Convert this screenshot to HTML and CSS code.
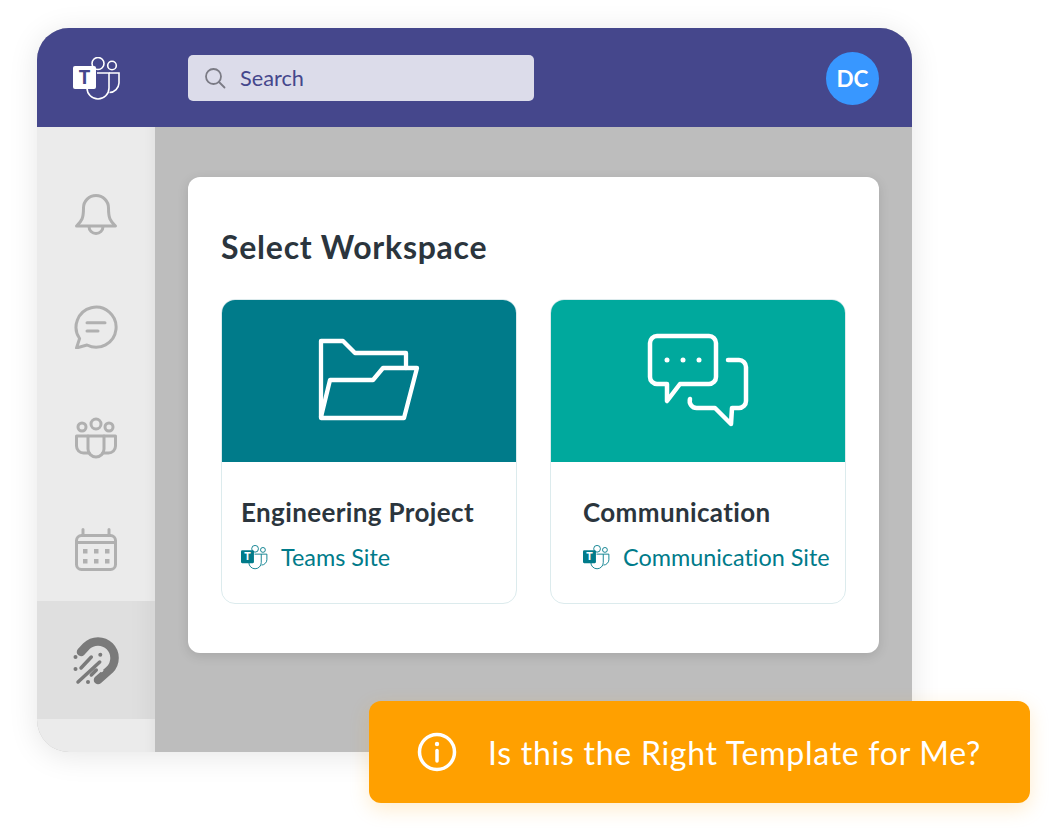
FILE: index.html
```html
<!DOCTYPE html>
<html lang="en">
<head>
<meta charset="utf-8">
<title>Select Workspace</title>
<link rel="stylesheet" href="styles.css">
</head>
<body>
<div class="stage">
  <div class="app">
    <header class="topbar">
      <svg class="teams-logo" viewBox="0 0 48 44">
        <g class="teams-line"><circle cx="25" cy="6.500" r="6"/><circle cx="39" cy="8.500" r="4.300"/><path d="M24 16H36V31A11 11 0 0 1 14 31V30"/><path d="M36 16H46V26A10 10 0 0 1 36.500 35.500"/></g>
        <rect class="teams-box" x="0" y="9" width="23" height="23" rx="2"/>
        <text class="teams-t" x="11.500" y="27" text-anchor="middle">T</text>
      </svg>
      <div class="search">
        <svg class="search-icon" viewBox="0 0 22 22"><circle cx="9.500" cy="9.500" r="7.500"/><path d="M15 15L20.500 20.500"/></svg>
        <span class="search-text">Search</span>
      </div>
      <div class="avatar">DC</div>
    </header>
    <div class="body">
      <nav class="sidebar">
        <div class="nav-icons">
          <svg class="nav-icon" viewBox="0 0 44 44"><path d="M2.500 33C8 28 9.500 25 9.500 15A12.500 12.500 0 0 1 34.500 15C34.500 25 36 28 41.500 33Z"/><path d="M15 33.500A7 7 0 0 0 29 33.500"/></svg>
          <svg class="nav-icon" viewBox="0 0 44 44"><path d="M5.600 33.500A20 20 0 1 1 13 40L2.500 43Z"/><path d="M13 17.700H31M13 26H24"/></svg>
          <svg class="nav-icon" viewBox="0 0 44 44"><circle cx="22" cy="8" r="5"/><circle cx="8" cy="11" r="4"/><circle cx="35" cy="11" r="4"/><path d="M14 20H30V33A8 8 0 0 1 14 33Z"/><path d="M14 20H2.500V30A7 7 0 0 0 9.500 37H15"/><path d="M30 20H41.500V30A7 7 0 0 1 34.500 37H29"/></svg>
          <svg class="nav-icon" viewBox="0 0 44 44"><rect x="2.500" y="7.500" width="39" height="34" rx="5"/><path d="M2.500 14.500H41.500M9 1.500V7.500M35 1.500V7.500"/><path class="cal-dots" d="M9 21h4.500v4.500H9zM20 21h4.500v4.500H20zM31 21h4.500v4.500H31zM9 31h4.500v4.500H9zM20 31h4.500v4.500H20zM31 31h4.500v4.500H31z"/></svg>
        </div>
        <div class="nav-active">
          <svg class="brand" viewBox="0 0 46 46"><path class="brand-ring" d="M8 15L13.300 9.300A16.500 16.500 0 1 1 36.700 32.700L25 43"/><path class="brand-streak" d="M18.300 20L8 31M26.700 25L5 45M23.300 33L18.300 38"/><circle class="brand-dot" cx="2.500" cy="20" r="2"/><circle class="brand-dot" cx="2.500" cy="32" r="2"/><circle class="brand-dot" cx="15" cy="45" r="2"/><circle class="brand-dot" cx="27.300" cy="17.700" r="2"/><circle class="brand-hole" cx="28.300" cy="33.300" r="2"/></svg>
        </div>
      </nav>
      <main class="content">
        <section class="modal">
          <h1 class="modal-title">Select Workspace</h1>
          <div class="cards">
            <article class="card">
              <div class="media media-teal">
                <svg class="folder" viewBox="0 0 104 84"><path d="M3 79V3H25L37 15H88V30"/><path d="M3 79L12 42H55L65 30H99L86 80H3Z"/></svg>
              </div>
              <div class="card-body">
                <h2 class="card-title">Engineering Project</h2>
                <div class="site">
                  <svg class="teams-small" viewBox="0 0 48 44">
                    <g class="teams-line"><circle cx="25" cy="6.500" r="6"/><circle cx="39" cy="8.500" r="4.300"/><path d="M24 16H36V31A11 11 0 0 1 14 31V30"/><path d="M36 16H46V26A10 10 0 0 1 36.500 35.500"/></g>
                    <rect class="teams-box" x="0" y="9" width="23" height="23" rx="2"/>
                    <text class="teams-t" x="11.500" y="27" text-anchor="middle">T</text>
                  </svg>
                  <span>Teams Site</span>
                </div>
              </div>
            </article>
            <article class="card">
              <div class="media media-green">
                <svg class="chat" viewBox="0 0 108 100"><path d="M12 6H64A7 7 0 0 1 71 13V47A7 7 0 0 1 64 54H35L22 71V54H12A7 7 0 0 1 5 47V13A7 7 0 0 1 12 6Z"/><path d="M83 30H94A7 7 0 0 1 101 37V71A7 7 0 0 1 94 78H87L86 94L70 78H52A7 7 0 0 1 45 69"/><circle class="chat-dot" cx="22" cy="30" r="2.500"/><circle class="chat-dot" cx="38" cy="30" r="2.500"/><circle class="chat-dot" cx="54" cy="30" r="2.500"/></svg>
              </div>
              <div class="card-body card-body-wide">
                <h2 class="card-title">Communication</h2>
                <div class="site">
                  <svg class="teams-small" viewBox="0 0 48 44">
                    <g class="teams-line"><circle cx="25" cy="6.500" r="6"/><circle cx="39" cy="8.500" r="4.300"/><path d="M24 16H36V31A11 11 0 0 1 14 31V30"/><path d="M36 16H46V26A10 10 0 0 1 36.500 35.500"/></g>
                    <rect class="teams-box" x="0" y="9" width="23" height="23" rx="2"/>
                    <text class="teams-t" x="11.500" y="27" text-anchor="middle">T</text>
                  </svg>
                  <span>Communication Site</span>
                </div>
              </div>
            </article>
          </div>
        </section>
      </main>
    </div>
  </div>
  <div class="toast">
    <svg class="toast-icon" viewBox="0 0 40 40"><circle cx="20" cy="20" r="17.500"/><path d="M20 18.500V29"/><circle class="toast-dot" cx="20" cy="12" r="2.200"/></svg>
    <span>Is this the Right Template for Me?</span>
  </div>
</div>
</body>
</html>
```
FILE: styles.css
```css
* { box-sizing: border-box; }
html, body { margin: 0; background: #fff; }
body { font-family: Lato, "Liberation Sans", sans-serif; overflow: hidden; font-variant-ligatures: none; }

.stage { position: relative; width: 1050px; height: 829px; padding: 28px 0 0 37px; overflow: hidden; }

.app {
  width: 875px; height: 724px; display: flex; flex-direction: column;
  border-radius: 32px; overflow: hidden; background: #bdbdbd;
  box-shadow: 0 4px 30px rgba(0,0,0,.10);
}

.topbar { height: 99px; flex: none; background: #45478c; display: flex; align-items: center; padding: 0 33px 0 36px; }
.teams-logo { width: 48px; height: 44px; margin-top: 2px; color: #fff; --t: #45478c; flex: none; }
.teams-line { fill: none; stroke: currentColor; stroke-width: 1.600; }
.teams-box { fill: currentColor; }
.teams-t { fill: var(--t); font: 900 19px Lato, sans-serif; }

.search { width: 346px; height: 46px; margin-left: 67px; background: #dcdcea; border-radius: 5px; display: flex; align-items: center; padding-left: 16px; }
.search-icon { width: 22px; height: 22px; fill: none; stroke: #7b7b85; stroke-width: 1.800; stroke-linecap: round; }
.search-text { margin-left: 14px; font-size: 21.700px; color: #45478c; }

.avatar { margin: 2px 0 0 auto; width: 53px; height: 53px; border-radius: 50%; background: #3897ff; color: #fff; display: flex; align-items: center; justify-content: center; font-size: 22.500px; font-weight: 700; }

.body { flex: 1; display: flex; min-height: 0; }

.sidebar { width: 118px; flex: none; background: #ebebeb; padding-top: 66px; box-shadow: inset -14px 0 12px -12px rgba(0,0,0,.05); }
.nav-icons { display: flex; flex-direction: column; align-items: center; gap: 67.700px; margin-bottom: 29px; }
.nav-icon { width: 44px; height: 44px; fill: none; stroke: #b0b0b0; stroke-width: 3; stroke-linecap: round; stroke-linejoin: round; display: block; }
.cal-dots { fill: #b0b0b0; stroke: none; }
.nav-active { height: 118px; background: #dfdfdf; display: flex; align-items: center; justify-content: center; box-shadow: inset -40px 0 20px -30px rgba(0,0,0,.04); }
.brand { width: 46px; height: 46px; overflow: visible; }
.brand-ring { fill: none; stroke: #7a7a7a; stroke-width: 8.500; stroke-linecap: round; }
.brand-streak { fill: none; stroke: #7a7a7a; stroke-width: 3.500; stroke-linecap: round; }
.brand-dot { fill: #7a7a7a; }
.brand-hole { fill: #dfdfdf; }

.content { flex: 1; padding: 50px 33px 0; }
.modal { height: 476px; background: #fff; border-radius: 12px; padding: 50px 33px 0; box-shadow: 0 3px 12px rgba(0,0,0,.12); }
.modal-title { margin: 0 0 32px; font-size: 32px; line-height: 40px; font-weight: 700; color: #2b353d; letter-spacing: .75px; }

.cards { display: flex; gap: 33px; }
.card { width: 296px; height: 305px; border: 1.500px solid #dcebed; border-radius: 14px; overflow: hidden; background: #fff; }
.media { height: 162px; display: flex; align-items: center; justify-content: center; }
.media-teal { background: #007b8a; }
.media-green { background: #00a99d; }
.folder { width: 104px; height: 84px; fill: none; stroke: #fff; stroke-width: 4.300; stroke-linejoin: round; stroke-linecap: round; margin: 0 0 2px 2px; }
.chat { width: 108px; height: 100px; fill: none; stroke: #fff; stroke-width: 4.500; stroke-linejoin: round; stroke-linecap: round; margin: 0 0 2px 2px; }
.chat-dot { fill: #fff; stroke: none; }

.card-body { padding: 32px 0 0 19px; }
.card-body-wide { padding-left: 32px; }
.card-title { margin: 0 0 10px; font-size: 26px; line-height: 36px; font-weight: 700; color: #2b353d; white-space: nowrap; letter-spacing: .37px; }
.site { display: flex; align-items: center; gap: 13px; color: #007b8a; font-size: 23.400px; line-height: 34px; white-space: nowrap; }
.teams-small { width: 27px; height: 25px; --t: #fff; flex: none; }

.toast {
  position: absolute; left: 369px; top: 701px; width: 661px; height: 102px;
  background: #ffa000; border-radius: 12px; color: #fff; display: flex; align-items: center;
  padding-left: 48px; gap: 31px; font-size: 32px; letter-spacing: .74px; box-shadow: 0 6px 20px rgba(255,160,0,.2);
}
.toast-icon { width: 40px; height: 40px; fill: none; stroke: #fff; stroke-width: 3.500; stroke-linecap: round; flex: none; }
.toast-dot { fill: #fff; stroke: none; }
```
